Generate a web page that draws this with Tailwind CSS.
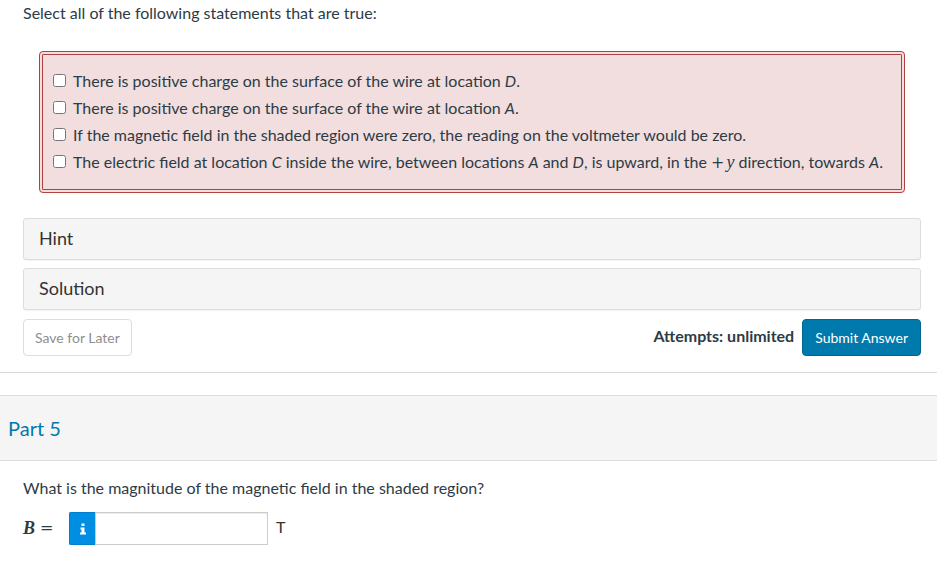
<!DOCTYPE html>
<html lang="en">
  <head>
    <meta charset="UTF-8" />
    <meta name="viewport" content="width=device-width, initial-scale=1.0" />
    <title>Assignment</title>
    <script src="https://cdn.jsdelivr.net/npm/@tailwindcss/browser@4"></script>
  </head>
  <body class="bg-white font-['Lato',sans-serif] text-base text-[#2d3b45]">
    <section class="border-b border-[#d8d8d8] pr-4 pb-4 pl-[23px]">
      <p class="pt-px leading-6">Select all of the following statements that are true:</p>

      <fieldset class="mx-4 mt-[26px] rounded-[4px] border-4 border-double border-[#b0413e] bg-[#f2dede] px-[10px] pt-3 pb-[14px]">
        <ul>
          <li class="flex h-[27px] items-center gap-[7px]">
            <input id="choice_1" type="checkbox" class="size-[13px]" />
            <label for="choice_1">There is positive charge on the surface of the wire at location <i>D</i>.</label>
          </li>
          <li class="flex h-[27px] items-center gap-[7px]">
            <input id="choice_2" type="checkbox" class="size-[13px]" />
            <label for="choice_2">There is positive charge on the surface of the wire at location <i>A</i>.</label>
          </li>
          <li class="flex h-[27px] items-center gap-[7px]">
            <input id="choice_3" type="checkbox" class="size-[13px]" />
            <label for="choice_3">If the magnetic field in the shaded region were zero, the reading on the voltmeter would be zero.</label>
          </li>
          <li class="flex h-[27px] items-center gap-[7px]">
            <input id="choice_4" type="checkbox" class="size-[13px]" />
            <label for="choice_4">The electric field at location <i>C</i> inside the wire, between locations <i>A</i> and <i>D</i>, is upward, in the <span class="font-['Liberation_Serif',serif] text-lg leading-none"><span class="font-['DejaVu_Serif',serif] text-base leading-none">+</span><i class="ml-[2px]">y</i></span> direction, towards <i>A</i>.</label>
          </li>
        </ul>
      </fieldset>

      <button type="button" class="mt-[25px] flex h-[42px] w-full items-center rounded-[3px] border border-[#ddd] bg-[#f5f5f5] px-[15px] pb-[2px] text-lg text-[#333] shadow-[0_1px_1px_rgba(0,0,0,0.05)]">Hint</button>
      <button type="button" class="mt-2 flex h-[42px] w-full items-center rounded-[3px] border border-[#ddd] bg-[#f5f5f5] px-[15px] pb-[2px] text-lg text-[#333] shadow-[0_1px_1px_rgba(0,0,0,0.05)]">Solution</button>

      <div class="mt-[9px] flex items-center justify-between">
        <button type="button" class="h-[37px] rounded-[4px] border border-[#ddd] px-[11px] text-sm text-[#8f8f8f]">Save for Later</button>
        <div class="flex items-center gap-2">
          <b class="pb-1">Attempts: unlimited</b>
          <button type="button" class="h-[37px] rounded-[4px] border border-[#006691] bg-[#0079ad] px-3 text-sm text-white">Submit Answer</button>
        </div>
      </div>
    </section>

    <section class="mt-[22px]">
      <h2 class="flex h-[66px] items-center border-y border-[#ddd] bg-[#f5f5f5] px-2 text-xl text-[#0079ad]">Part 5</h2>
      <div class="px-[23px] pt-[15px]">
        <p class="leading-6">What is the magnitude of the magnetic field in the shaded region?</p>
        <div class="mt-3 flex items-center">
          <label for="answer" class="flex w-[46px] items-center gap-[5px] pb-[2px] font-['Liberation_Serif',serif] text-lg"><b><i>B</i></b><span class="font-['DejaVu_Serif',serif] text-base">=</span></label>
          <button type="button" aria-label="Info" class="flex h-[33px] w-[26px] items-center justify-center rounded-l-[2px] border border-r-0 border-[#007fcb] bg-[#008ee2] text-white">
            <svg viewBox="0 0 6 12" fill="currentColor" class="h-3 w-[6px]">
              <path d="M1.5 0.5h3v2.5h-3zM0.5 4.5h4v5h1.5v2H0v-2h1.5v-3h-1z" />
            </svg>
          </button>
          <input id="answer" type="text" class="h-[33px] w-[173px] border border-[#ccc] px-2 shadow-[inset_0_1px_1px_rgba(0,0,0,0.075)]" />
          <span class="ml-2 pb-1 text-[#333]">T</span>
        </div>
      </div>
    </section>
  </body>
</html>
